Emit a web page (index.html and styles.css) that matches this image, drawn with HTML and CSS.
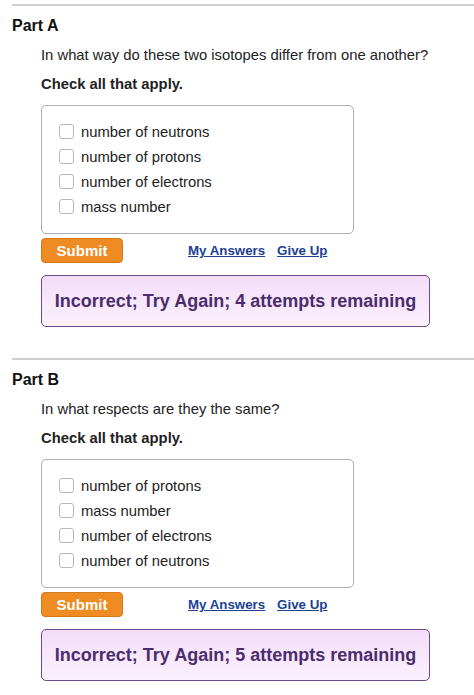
FILE: index.html
```html
<!DOCTYPE html>
<html>
<head>
<meta charset="utf-8">
<link rel="stylesheet" href="styles.css">
</head>
<body>
<section class="part">
  <h2 class="part-title">Part A</h2>
  <div class="part-body">
    <p class="question">In what way do these two isotopes differ from one another?</p>
    <p class="instruction">Check all that apply.</p>
    <div class="choices">
      <label class="choice"><span class="box"></span>number of neutrons</label>
      <label class="choice"><span class="box"></span>number of protons</label>
      <label class="choice"><span class="box"></span>number of electrons</label>
      <label class="choice"><span class="box"></span>mass number</label>
    </div>
    <div class="actions">
      <button class="submit">Submit</button>
      <a class="link" href="#">My Answers</a>
      <a class="link" href="#">Give Up</a>
    </div>
    <div class="feedback">Incorrect; Try Again; 4 attempts remaining</div>
  </div>
</section>
<section class="part">
  <h2 class="part-title">Part B</h2>
  <div class="part-body">
    <p class="question">In what respects are they the same?</p>
    <p class="instruction">Check all that apply.</p>
    <div class="choices">
      <label class="choice"><span class="box"></span>number of protons</label>
      <label class="choice"><span class="box"></span>mass number</label>
      <label class="choice"><span class="box"></span>number of electrons</label>
      <label class="choice"><span class="box"></span>number of neutrons</label>
    </div>
    <div class="actions">
      <button class="submit">Submit</button>
      <a class="link" href="#">My Answers</a>
      <a class="link" href="#">Give Up</a>
    </div>
    <div class="feedback">Incorrect; Try Again; 5 attempts remaining</div>
  </div>
</section>
</body>
</html>
```
FILE: styles.css
```css
html, body {
  margin: 0;
  padding: 0;
  background: #ffffff;
}
body {
  font-family: "Liberation Sans", Arial, Helvetica, sans-serif;
  color: #222;
  padding-top: 4px;
}
.part {
  margin-left: 12px;
  border-top: 2px solid #cfcfcf;
  padding-bottom: 31px;
}
.part-title {
  margin: 0;
  padding-top: 10px;
  font-size: 16px;
  font-weight: bold;
  line-height: 20px;
  color: #111;
}
.part-body {
  padding-left: 29px;
}
.question {
  margin: 9px 0 0;
  font-size: 14.8px;
  line-height: 20px;
  color: #222;
}
.instruction {
  margin: 9px 0 0;
  font-size: 14.8px;
  font-weight: bold;
  line-height: 20px;
  color: #222;
}
.choices {
  margin-top: 11px;
  width: 313px;
  box-sizing: border-box;
  border: 1px solid #adadad;
  border-radius: 5px;
  padding: 13px 0 14px 17px;
  display: flex;
  flex-direction: column;
}
.choice {
  display: flex;
  align-items: center;
  height: 25px;
  font-size: 14.8px;
  color: #222;
}
.box {
  width: 15px;
  height: 15px;
  box-sizing: border-box;
  border: 1px solid #b8b8b8;
  border-radius: 3px;
  margin-right: 7px;
  background: #fff;
}
.actions {
  display: flex;
  align-items: center;
  margin-top: 4px;
  height: 25px;
}
.submit {
  width: 82px;
  height: 25px;
  border: 1px solid #d47a1e;
  border-radius: 4px;
  background: #ef8b23;
  color: #fff;
  font-family: "Liberation Sans", Arial, sans-serif;
  font-weight: bold;
  font-size: 15px;
  padding: 0;
  margin-right: 65px;
}
.link {
  color: #1d3f94;
  font-weight: bold;
  font-size: 13.3px;
  text-decoration: underline;
  margin-right: 12px;
}
.feedback {
  margin-top: 12px;
  width: 389px;
  height: 52px;
  box-sizing: border-box;
  border: 1px solid #6c4a8c;
  border-radius: 5px;
  background: linear-gradient(#f3ddfa, #fbf1fd);
  color: #4b2d6c;
  font-weight: bold;
  font-size: 18px;
  display: flex;
  align-items: center;
  justify-content: center;
}
```
